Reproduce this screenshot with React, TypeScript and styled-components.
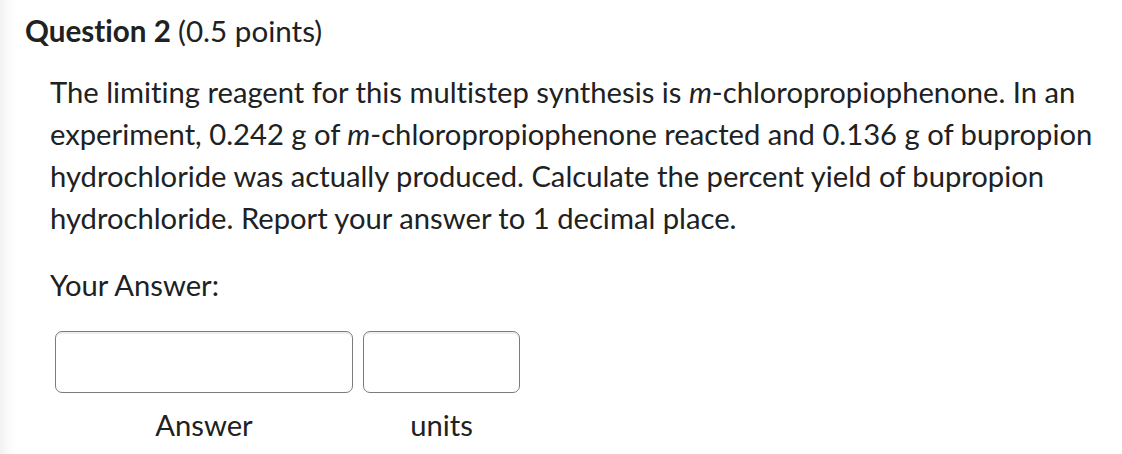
import React from "react";
import styled, { createGlobalStyle } from "styled-components";

const Global = createGlobalStyle`
  html, body { margin: 0; padding: 0; background: #fff; }
  body {
    font-family: Lato, "Open Sans", sans-serif;
    color: #202122;
    font-variant-ligatures: none;
    font-feature-settings: "liga" 0;
  }
`;

const Page = styled.div`
  width: 1122px;
  height: 454px;
  box-sizing: border-box;
  padding: 12px 0 0 25px;
  overflow: hidden;
  background: linear-gradient(to right, #f2f2f2 0px, #fafafa 8px, #fff 16px);
`;

const Title = styled.h2`
  margin: 0;
  font-size: 29.6px;
  line-height: 38px;
  font-weight: 700;
  color: #202122;
  white-space: nowrap;
`;

const Points = styled.span`
  font-weight: 400;
`;

const Body = styled.div`
  padding: 21px 0 0 25px;
`;

const Prompt = styled.p`
  margin: 0;
  font-size: 29.2px;
  line-height: 42px;
  white-space: nowrap;
`;

const Label = styled.p`
  margin: 27px 0 0;
  font-size: 29.2px;
  line-height: 38px;
`;

const Fields = styled.div`
  display: flex;
  gap: 10px;
  margin: 27px 0 0 5px;
`;

const Field = styled.div<{ $w: number }>`
  display: flex;
  flex-direction: column;
  align-items: center;
  width: ${(p) => p.$w}px;
`;

const Input = styled.div`
  width: 100%;
  height: 62px;
  box-sizing: border-box;
  border: 1px solid #7a7c7f;
  border-radius: 7px;
  box-shadow: inset 0 3px 1px -1px #eceef1;
  background: #fff;
`;

const Caption = styled.span`
  margin-top: 15px;
  font-size: 29.2px;
  line-height: 34px;
`;

export default function App() {
  return (
    <Page>
      <Global />
      <Title>
        Question 2 <Points>(0.5 points)</Points>
      </Title>
      <Body>
        <Prompt>
          The limiting reagent for this multistep synthesis is <i>m</i>-chloropropiophenone. In an
          <br />
          experiment, 0.242 g of <i>m</i>-chloropropiophenone reacted and 0.136 g of bupropion
          <br />
          hydrochloride was actually produced. Calculate the percent yield of bupropion
          <br />
          hydrochloride. Report your answer to 1 decimal place.
        </Prompt>
        <Label>Your Answer:</Label>
        <Fields>
          <Field $w={298}>
            <Input />
            <Caption>Answer</Caption>
          </Field>
          <Field $w={157}>
            <Input />
            <Caption>units</Caption>
          </Field>
        </Fields>
      </Body>
    </Page>
  );
}
